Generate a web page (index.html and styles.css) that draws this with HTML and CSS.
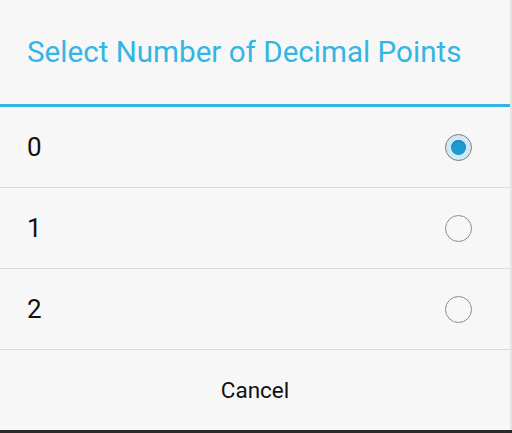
FILE: index.html
```html
<!DOCTYPE html>
<html lang="en">
  <head>
    <meta charset="UTF-8" />
    <meta name="viewport" content="width=device-width, initial-scale=1.0" />
    <title>Select Number of Decimal Points</title>
    <link rel="stylesheet" href="styles.css">
  </head>
  <body>
    <div class="dialog">
      <h1 class="dialog-title">Select Number of Decimal Points</h1>
      <ul class="choice-list">
        <li class="choice">
          <span class="choice-label">0</span>
          <span class="radio checked"><span class="radio-dot"></span></span>
        </li>
        <li class="choice">
          <span class="choice-label">1</span>
          <span class="radio"></span>
        </li>
        <li class="choice">
          <span class="choice-label">2</span>
          <span class="radio"></span>
        </li>
      </ul>
      <button class="cancel-button">Cancel</button>
    </div>
  </body>
</html>
```

FILE: styles.css
```css
body {
  margin: 0;
  padding: 0;
  background-color: #2a2a2a;
  font-family: Roboto, "Liberation Sans", sans-serif;
}
.dialog {
  width: 510px;
  height: 430px;
  background-color: #f7f7f7;
  border-right: 2px solid #e4e4e4;
  display: flex;
  flex-direction: column;
}
.dialog-title {
  margin: 0;
  height: 107px;
  padding: 0 0 1px 27px;
  box-sizing: border-box;
  display: flex;
  align-items: center;
  font-size: 29.6px;
  font-weight: normal;
  color: #33b5e5;
  border-bottom: 3px solid #33b5e5;
}
.choice-list {
  list-style: none;
  margin: 0;
  padding: 0;
}
.choice {
  height: 80px;
  display: flex;
  align-items: center;
  justify-content: space-between;
  padding: 0 38px 0 27px;
  border-bottom: 1.5px solid #dadada;
}
.choice-label {
  font-size: 26px;
  color: #111;
}
.radio {
  width: 25px;
  height: 25px;
  border-radius: 50%;
  border: 1.5px solid #8c8c8c;
  display: flex;
  align-items: center;
  justify-content: center;
}
.radio.checked {
  background-color: #cfeaf6;
  border-color: #7d7d7d;
}
.radio-dot {
  width: 15px;
  height: 15px;
  border-radius: 50%;
  background-color: #1e9bd2;
  box-shadow: inset 0 1px 2px rgba(0, 60, 100, 0.4);
}
.cancel-button {
  flex: 1;
  border: none;
  background: none;
  font-family: inherit;
  font-size: 22.5px;
  color: #111;
  cursor: pointer;
}
```
